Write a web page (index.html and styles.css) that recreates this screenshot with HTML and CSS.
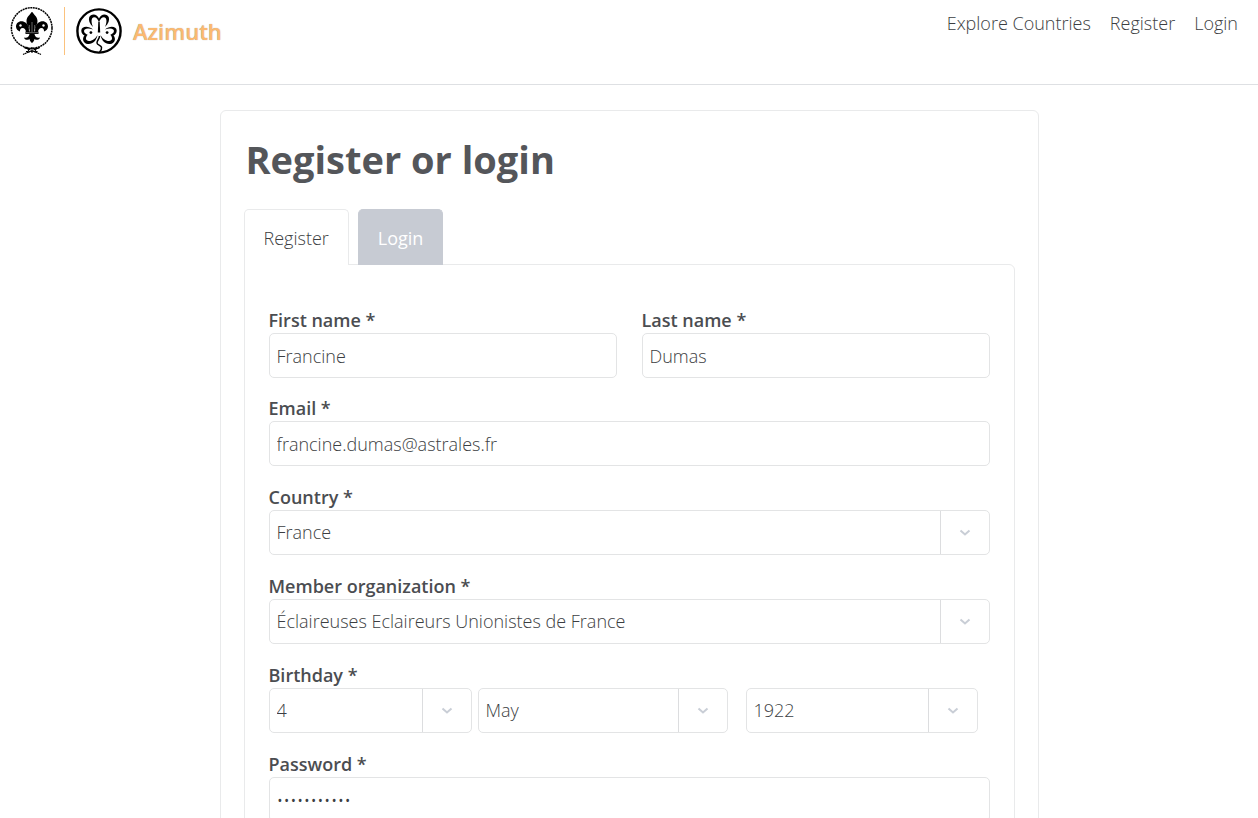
FILE: index.html
```html
<!DOCTYPE html>
<html lang="en">
<head>
    <meta charset="UTF-8">
    <meta name="viewport" content="width=device-width, initial-scale=1.0">
    <title>Azimuth - Register or login</title>
    <link rel="stylesheet" href="styles.css">
</head>
<body>
    <header class="header">
        <a class="brand" href="#">
            <svg class="brand-scout" viewBox="0 0 44 50" aria-hidden="true">
                <circle cx="21.700" cy="22" r="20.300" fill="none" stroke="#000" stroke-width="1.500" stroke-dasharray="2 0.600"/>
                <path d="M22 5.500c-1.500 3-5.500 5-5.500 9.500 0 4 2.700 6 3.300 11h4.400c.6-5 3.300-7 3.300-11 0-4.500-4-6.500-5.500-9.500z"/>
                <path d="M19.300 26c0-5-1.500-9-6-10.500-4-1.200-7.300 1.500-7.300 5 0 2.500 1.800 4.500 4 5-.2-2 .8-3.500 2.500-3.500 2.200 0 3.300 2 3.500 4z"/>
                <path d="M24.700 26c0-5 1.500-9 6-10.500 4-1.200 7.300 1.500 7.300 5 0 2.500-1.800 4.500-4 5 .2-2-.8-3.500-2.500-3.500-2.200 0-3.300 2-3.500 4z"/>
                <path d="M15.500 25.500h13v2.500h-13z"/>
                <path d="M19.500 28c-.5 3-2.500 4.500-5.500 3.500.5 2.500 3.500 3 5.500 1.500.3 1.800 1.200 3 2.500 4 1.300-1 2.200-2.200 2.500-4 2 1.500 5 1 5.500-1.500-3 1-5-.5-5.500-3.500z"/>
                <path d="M22 16v10M16 26.700h12M19.300 19v6M24.700 19v6" fill="none" stroke="#fff" stroke-width="0.400"/>
                <circle cx="10.500" cy="19.500" r="1.200" fill="#fff"/>
                <circle cx="33.500" cy="19.500" r="1.200" fill="#fff"/>
                <path d="M14 41.500l7 2.500 10 4.500M30 41.500L23 44l-10 4.500M15.500 42.500h13M16 45.500h12M17 41l2.500 5.500M27 41l-2.500 5.500M22 41v6" fill="none" stroke="#000" stroke-width="1.100" stroke-dasharray="2 0.400"/>
            </svg>
            <span class="brand-line"></span>
            <svg class="brand-guide" viewBox="0 0 46 46" aria-hidden="true">
                <circle cx="23" cy="23" r="21.600" fill="none" stroke="#000" stroke-width="2.400"/>
                <!-- top leaf -->
                <path d="M17 19C13.500 16 12.300 12 13.200 9.300 14.300 6 20.500 4.500 23 10.500 25.500 4.500 31.700 6 32.800 9.300 33.700 12 32.500 16 29 19 30.500 15.500 31 12.500 29.800 10.300 28 7.800 24.500 9.500 23 14.500 21.500 9.500 18 7.800 16.200 10.300 15 12.500 15.500 15.500 17 19z"/>
                <!-- side leaves -->
                <path d="M17 21.500C12.500 17.500 5.500 18 5.300 22.500c0 2.500 1.300 4 3.200 5C5.500 31 7.500 35.500 11.800 36c5 .5 8.700-3.500 9.700-9-2 3.500-5 6-8.500 6-3.500-.2-4-3.500-1.300-6.300C8.300 25.500 7.200 23 8.800 21.500c2-1.700 5.200-1 8.200 0z"/>
                <path d="M29 21.500c4.500-4 11.500-3.500 11.700 1 0 2.500-1.300 4-3.200 5 3 3.500 1 8-3.300 8.500-5 .5-8.700-3.500-9.700-9 2 3.500 5 6 8.500 6 3.500-.2 4-3.500 1.300-6.300 3.400-1.200 4.500-3.700 2.900-5.200-2-1.700-5.200-1-8.200 0z"/>
                <path d="M22.300 14h1.400l.5 10.500h-2.400z"/>
                <circle cx="14.900" cy="24.600" r="1.400"/>
                <circle cx="31.100" cy="24.600" r="1.400"/>
                <path d="M23.500 28c0 3-2.700 4.500-2.500 7 .3 2.200 3.800 2 4.500 4.300.4 1.700-.5 3.200-2 4.700" fill="none" stroke="#000" stroke-width="1.500"/>
            </svg>
            <span class="brand-name">Azimuth</span>
        </a>
        <nav class="nav">
            <a href="#">Explore Countries</a>
            <a href="#">Register</a>
            <a href="#">Login</a>
        </nav>
    </header>

    <main class="card">
        <h1>Register or login</h1>

        <div class="tabs" role="tablist">
            <button type="button" class="tab active" role="tab" aria-selected="true">Register</button>
            <button type="button" class="tab" role="tab" aria-selected="false">Login</button>
        </div>

        <form class="panel">
            <div class="names">
                <div class="field">
                    <label for="first-name">First name *</label>
                    <input type="text" id="first-name" value="Francine">
                </div>
                <div class="field">
                    <label for="last-name">Last name *</label>
                    <input type="text" id="last-name" value="Dumas">
                </div>
            </div>

            <div class="field">
                <label for="email">Email *</label>
                <input type="email" id="email" value="francine.dumas@astrales.fr">
            </div>

            <div class="field">
                <label for="country">Country *</label>
                <div class="select">
                    <select id="country">
                        <option>France</option>
                    </select>
                    <span class="arrow"><svg viewBox="0 0 12 8"><path d="M1.500 1.500L6 5.500l4.500-4"/></svg></span>
                </div>
            </div>

            <div class="field">
                <label for="organization">Member organization *</label>
                <div class="select">
                    <select id="organization">
                        <option>Éclaireuses Eclaireurs Unionistes de France</option>
                    </select>
                    <span class="arrow"><svg viewBox="0 0 12 8"><path d="M1.500 1.500L6 5.500l4.500-4"/></svg></span>
                </div>
            </div>

            <div class="field">
                <label for="day">Birthday *</label>
                <div class="birthday">
                    <div class="select">
                        <select id="day">
                            <option>4</option>
                        </select>
                        <span class="arrow"><svg viewBox="0 0 12 8"><path d="M1.500 1.500L6 5.500l4.500-4"/></svg></span>
                    </div>
                    <div class="select">
                        <select id="month" aria-label="Month">
                            <option>May</option>
                        </select>
                        <span class="arrow"><svg viewBox="0 0 12 8"><path d="M1.500 1.500L6 5.500l4.500-4"/></svg></span>
                    </div>
                    <div class="select year">
                        <select id="year" aria-label="Year">
                            <option>1922</option>
                        </select>
                        <span class="arrow"><svg viewBox="0 0 12 8"><path d="M1.500 1.500L6 5.500l4.500-4"/></svg></span>
                    </div>
                </div>
            </div>

            <div class="field">
                <label for="password">Password *</label>
                <input type="password" id="password" value="montagne922">
            </div>
        </form>
    </main>
</body>
</html>
```

FILE: styles.css
```css
* {
    box-sizing: border-box;
}
html {
    scrollbar-width: none;
}
body {
    margin: 0;
    font-family: "Open Sans", sans-serif;
    font-size: 18px;
    font-weight: 300;
    line-height: 25px;
    color: #3c3e42;
    background: #fff;
}
.header {
    display: flex;
    justify-content: space-between;
    align-items: flex-start;
    height: 85px;
    padding: 6px 20px 0 10px;
    border-bottom: 1px solid #dee0e3;
}
.brand {
    display: flex;
    align-items: center;
    color: #fbb970;
    text-decoration: none;
}
.brand-scout {
    width: 44px;
    height: 50px;
}
.brand-line {
    width: 1px;
    height: 48px;
    margin: 0 11px 0 10px;
    background: #fbc27d;
}
.brand-guide {
    width: 46px;
    height: 46px;
}
.brand-name {
    margin-left: 11px;
    font-size: 22px;
    font-weight: 600;
    text-shadow: 0 0 1px #a8a29a;
}
.nav {
    display: flex;
    gap: 19px;
    padding-top: 5px;
}
.nav a {
    color: inherit;
    text-decoration: none;
}
.card {
    max-width: 819px;
    margin: 25px auto;
    padding: 23px;
    border: 1px solid #e9eaeb;
    border-radius: 6px;
}
h1 {
    margin: 0 0 25px 2px;
    font-size: 38px;
    font-weight: 700;
    line-height: 50px;
    color: #54565a;
}
.tabs {
    display: flex;
    gap: 9px;
}
.tab {
    height: 56px;
    padding: 2px 19px 0;
    border: 1px solid #c7cbd3;
    border-bottom: none;
    border-radius: 5px 5px 0 0;
    font: inherit;
    font-weight: 400;
    color: #fff;
    background: #c7cbd3;
    cursor: pointer;
}
.tab.active {
    position: relative;
    z-index: 1;
    border-color: #e9eaeb;
    font-weight: 300;
    color: inherit;
    background: #fff;
}
.panel {
    margin-top: -1px;
    padding: 43px 24px 24px;
    border: 1px solid #e9eaeb;
    border-radius: 0 6px 6px 6px;
}
.names {
    display: grid;
    grid-template-columns: 1fr 1fr;
    gap: 25px;
    margin-bottom: -1px;
}
.field {
    margin-bottom: 19px;
}
label {
    display: block;
    font-weight: 600;
    color: #4b4d51;
}
input,
select {
    display: block;
    width: 100%;
    height: 45px;
    padding: 0 7px;
    border: 1px solid #e3e4e5;
    border-radius: 5px;
    font: inherit;
    color: inherit;
    background: #fff;
}
select {
    appearance: none;
    padding-right: 56px;
}
.select {
    position: relative;
}
.arrow {
    position: absolute;
    top: 1px;
    right: 1px;
    bottom: 1px;
    display: flex;
    align-items: center;
    justify-content: center;
    width: 49px;
    border-left: 1px solid #dcdddf;
    pointer-events: none;
}
.arrow svg {
    width: 12px;
    height: 8px;
    fill: none;
    stroke: #c9ced6;
    stroke-width: 2;
}
.birthday {
    display: grid;
    grid-template-columns: 203fr 250fr 244fr;
    gap: 6px;
    padding-right: 12px;
}
.year {
    margin-left: 12px;
}
```
